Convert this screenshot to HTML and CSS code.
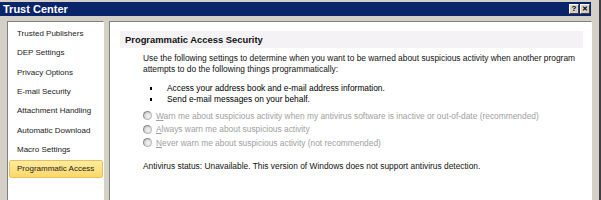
FILE: index.html
```html
<!DOCTYPE html>
<html>
<head>
<meta charset="utf-8">
<link rel="stylesheet" href="styles.css">
</head>
<body>
<div class="window">
  <div class="titlebar">
    <span class="title">Trust Center</span>
    <div class="tbtns">
      <span class="tbtn">?</span>
      <span class="tbtn x">✕</span>
    </div>
  </div>
  <div class="content">
    <ul class="nav">
      <li>Trusted Publishers</li>
      <li>DEP Settings</li>
      <li>Privacy Options</li>
      <li>E-mail Security</li>
      <li>Attachment Handling</li>
      <li>Automatic Download</li>
      <li>Macro Settings</li>
      <li class="sel"><span>Programmatic Access</span></li>
    </ul>
    <div class="pane">
      <div class="header">Programmatic Access Security</div>
      <div class="body">
        <p class="intro">Use the following settings to determine when you want to be warned about suspicious activity when another program attempts to do the following things programmatically:</p>
        <ul class="bullets">
          <li>Access your address book and e-mail address information.</li>
          <li>Send e-mail messages on your behalf.</li>
        </ul>
        <div class="radios">
          <div class="radio"><span class="dot"></span><span class="lbl"><u>W</u>arn me about suspicious activity when my antivirus software is inactive or out-of-date (recommended)</span></div>
          <div class="radio"><span class="dot"></span><span class="lbl"><u>A</u>lways warn me about suspicious activity</span></div>
          <div class="radio"><span class="dot"></span><span class="lbl"><u>N</u>ever warn me about suspicious activity (not recommended)</span></div>
        </div>
        <p class="status">Antivirus status: Unavailable. This version of Windows does not support antivirus detection.</p>
      </div>
    </div>
  </div>
</div>
</body>
</html>
```

FILE: styles.css
```css
html, body {
  margin: 0;
  padding: 0;
  width: 601px;
  height: 200px;
  overflow: hidden;
  background: #d4d0c8;
  font-family: "Liberation Sans", Arial, sans-serif;
  font-size: 8px;
  color: #000;
}
.window {
  width: 599px;
  height: 198px;
  border-right: 2px solid #404040;
  padding-top: 2px;
}
.titlebar {
  height: 14px;
  width: 591px;
  background: #0a246a;
  display: flex;
  align-items: center;
  justify-content: space-between;
  box-sizing: border-box;
  padding: 0 1px 0 3px;
}
.title {
  color: #fff;
  font-weight: bold;
  font-size: 11px;
}
.tbtns {
  display: flex;
  gap: 1px;
}
.tbtn {
  width: 10px;
  height: 10px;
  box-sizing: border-box;
  background: #d4d0c8;
  border: 1px solid;
  border-color: #fff #404040 #404040 #fff;
  font-size: 8px;
  font-weight: bold;
  line-height: 8px;
  text-align: center;
  color: #000;
}
.tbtn.x {
  font-size: 7px;
}
.content {
  display: flex;
  gap: 5px;
  padding: 5px 0 0 7px;
  width: 592px;
  box-sizing: border-box;
}
.nav {
  list-style: none;
  margin: 0;
  padding: 2px 0 0 0;
  width: 97px;
  height: 200px;
  box-sizing: border-box;
  background: #fff;
  border: 1px solid;
  border-color: #808080 #fff #fff #808080;
}
.nav li {
  height: 19.33px;
  display: flex;
  align-items: center;
  padding-left: 9px;
  color: #222;
}
.nav li.sel {
  padding-left: 1px;
}
.nav li.sel span {
  display: flex;
  align-items: center;
  width: 94px;
  height: 18px;
  box-sizing: border-box;
  padding-left: 7px;
  background: linear-gradient(#ffeca0, #ffd768);
  border: 1px solid #e8c15c;
  border-radius: 2px;
}
.pane {
  flex: 1;
  height: 200px;
  background: #fff;
  border: 1px solid;
  border-color: #808080 #fff #fff #808080;
  box-sizing: border-box;
  padding: 9px 8px 0 10px;
}
.header {
  height: 17px;
  background: #f4f2f5;
  display: flex;
  align-items: center;
  padding-left: 5px;
  font-weight: bold;
  font-size: 9.4px;
  color: #111;
}
.body {
  padding-left: 23px;
  padding-top: 5px;
  font-size: 8.4px;
}
.intro {
  margin: 0;
  line-height: 11px;
  color: #111;
}
.bullets {
  margin: 8px 0 0 0;
  padding: 0;
  list-style: none;
}
.bullets li {
  line-height: 11px;
  padding-left: 24px;
  position: relative;
}
.bullets li::before {
  content: "";
  position: absolute;
  left: 7px;
  top: 4px;
  width: 2px;
  height: 3px;
  background: #000;
}
.radios {
  margin-top: 5px;
  display: flex;
  flex-direction: column;
  gap: 2.5px;
}
.radio {
  display: flex;
  align-items: center;
  gap: 4px;
  height: 11px;
}
.dot {
  width: 9px;
  height: 9px;
  border-radius: 50%;
  box-sizing: border-box;
  background: radial-gradient(circle at 60% 60%, #f4f4f4 0, #e2e2e2 45%, #a8a8a8 100%);
  border: 1px solid #b8b8b8;
  border-top-color: #8c8c8c;
  border-left-color: #8c8c8c;
}
.lbl {
  color: #a0a0a0;
}
.lbl u {
  text-decoration: underline;
}
.status {
  margin: 13px 0 0 0;
  line-height: 11px;
  color: #111;
}
```
